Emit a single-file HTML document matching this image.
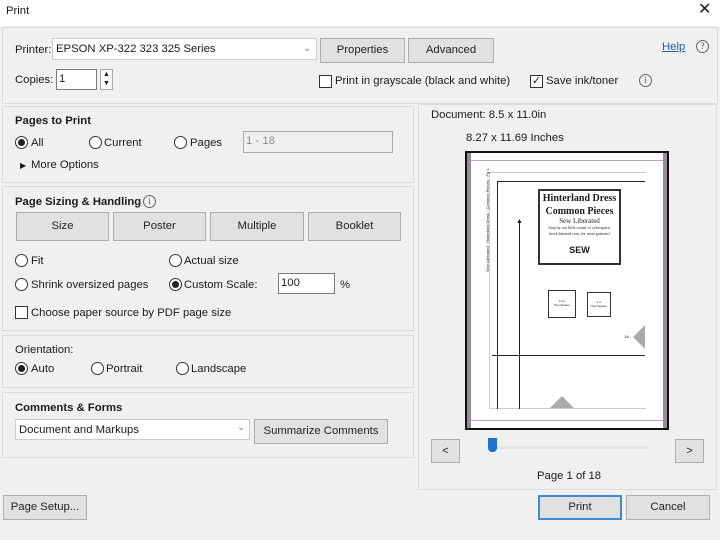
<!DOCTYPE html>
<html><head><meta charset="utf-8"><style>
*{box-sizing:border-box;margin:0;padding:0}
body{width:720px;height:540px;background:#f0f0f0;font-family:"Liberation Sans",sans-serif;font-size:11.3px;color:#1a1a1a;position:relative;overflow:hidden}
.a{position:absolute;white-space:nowrap;line-height:15px}
.panel{position:absolute;border:1px solid #dcdcdc;background:#f0f0f0}
.btn{position:absolute;background:#e1e1e1;border:1px solid #adadad;text-align:center;color:#222}
.inp{position:absolute;background:#fff;border:1px solid #7a7a7a}
.rad{position:absolute;width:13px;height:13px;border:1px solid #333;border-radius:50%;background:#fff}
.rad.on::after{content:"";position:absolute;left:2px;top:2px;width:7px;height:7px;border-radius:50%;background:#222}
.chk{position:absolute;width:13px;height:13px;border:1px solid #333;background:#fff}
.b{font-weight:bold}
.info{position:absolute;width:13px;height:13px;border:1px solid #666;border-radius:50%;font-size:9px;text-align:center;line-height:11px;color:#555;font-family:"Liberation Serif",serif}
</style></head><body>
<div class="a" style="left:0;top:0;width:720px;height:26px;background:#fff"></div>
<div class="a" style="left:6px;top:4px">Print</div>
<div class="a" style="left:698px;top:1px;font-size:16px;line-height:18px">✕</div>

<div class="panel" style="left:2px;top:27px;width:716px;height:77px"></div>
<div class="a" style="left:15px;top:43px">Printer:</div>
<div class="inp" style="left:52px;top:38px;width:265px;height:22px;border-color:#ccc"></div>
<div class="a" style="left:56px;top:42px">EPSON XP-322 323 325 Series</div>
<div class="a" style="left:303px;top:41px;color:#888;font-size:10px">⌄</div>
<div class="btn" style="left:320px;top:38px;width:85px;height:25px;line-height:23px">Properties</div>
<div class="btn" style="left:408px;top:38px;width:86px;height:25px;line-height:23px">Advanced</div>
<div class="a" style="left:662px;top:40px;color:#1a5fb4;text-decoration:underline">Help</div>
<div class="info" style="left:696px;top:40px">?</div>
<div class="a" style="left:15px;top:73px">Copies:</div>
<div class="inp" style="left:56px;top:69px;width:41px;height:21px"></div>
<div class="a" style="left:59px;top:72px">1</div>
<div class="a" style="left:100px;top:69px;width:13px;height:21px;border:1px solid #aaa;background:#f8f8f8;font-size:7px;text-align:center;line-height:9px">▲<br>▼</div>
<div class="chk" style="left:319px;top:75px"></div>
<div class="a" style="left:335px;top:74px">Print in grayscale (black and white)</div>
<div class="chk" style="left:530px;top:75px;font-size:11px;line-height:11px;text-align:center">✓</div>
<div class="a" style="left:546px;top:74px">Save ink/toner</div>
<div class="info" style="left:639px;top:74px">i</div>

<div class="panel" style="left:2px;top:106px;width:412px;height:77px"></div>
<div class="a b" style="left:15px;top:114px">Pages to Print</div>
<div class="rad on" style="left:15px;top:136px"></div><div class="a" style="left:31px;top:136px">All</div>
<div class="rad" style="left:89px;top:136px"></div><div class="a" style="left:104px;top:136px">Current</div>
<div class="rad" style="left:174px;top:136px"></div><div class="a" style="left:190px;top:136px">Pages</div>
<div class="inp" style="left:243px;top:131px;width:150px;height:22px;background:#f0f0f0;border-color:#aaa"></div>
<div class="a" style="left:246px;top:134px;color:#888">1 - 18</div>
<div class="a" style="left:20px;top:158px;font-size:8px">▶</div><div class="a" style="left:31px;top:158px">More Options</div>

<div class="panel" style="left:2px;top:186px;width:412px;height:145px"></div>
<div class="a b" style="left:15px;top:195px">Page Sizing &amp; Handling</div>
<div class="info" style="left:143px;top:195px">i</div>
<div class="btn" style="left:16px;top:212px;width:93px;height:29px;line-height:27px">Size</div>
<div class="btn" style="left:113px;top:212px;width:93px;height:29px;line-height:27px">Poster</div>
<div class="btn" style="left:210px;top:212px;width:94px;height:29px;line-height:27px">Multiple</div>
<div class="btn" style="left:308px;top:212px;width:93px;height:29px;line-height:27px">Booklet</div>
<div class="rad" style="left:15px;top:254px"></div><div class="a" style="left:31px;top:254px">Fit</div>
<div class="rad" style="left:169px;top:254px"></div><div class="a" style="left:184px;top:254px">Actual size</div>
<div class="rad" style="left:15px;top:278px"></div><div class="a" style="left:31px;top:278px">Shrink oversized pages</div>
<div class="rad on" style="left:169px;top:278px"></div><div class="a" style="left:184px;top:278px">Custom Scale:</div>
<div class="inp" style="left:278px;top:273px;width:57px;height:21px"></div>
<div class="a" style="left:281px;top:276px">100</div>
<div class="a" style="left:340px;top:278px">%</div>
<div class="chk" style="left:15px;top:306px"></div><div class="a" style="left:31px;top:306px">Choose paper source by PDF page size</div>

<div class="panel" style="left:2px;top:335px;width:412px;height:53px"></div>
<div class="a" style="left:15px;top:343px">Orientation:</div>
<div class="rad on" style="left:15px;top:362px"></div><div class="a" style="left:31px;top:362px">Auto</div>
<div class="rad" style="left:91px;top:362px"></div><div class="a" style="left:106px;top:362px">Portrait</div>
<div class="rad" style="left:176px;top:362px"></div><div class="a" style="left:191px;top:362px">Landscape</div>

<div class="panel" style="left:2px;top:392px;width:412px;height:66px"></div>
<div class="a b" style="left:15px;top:401px">Comments &amp; Forms</div>
<div class="inp" style="left:15px;top:419px;width:235px;height:21px;border-color:#ccc"></div>
<div class="a" style="left:19px;top:423px">Document and Markups</div>
<div class="a" style="left:237px;top:420px;color:#888;font-size:10px">⌄</div>
<div class="btn" style="left:254px;top:419px;width:134px;height:25px;line-height:23px">Summarize Comments</div>

<div class="panel" style="left:418px;top:104px;width:299px;height:386px"></div>
<div class="a" style="left:431px;top:108px">Document: 8.5 x 11.0in</div>
<div class="a" style="left:466px;top:131px">8.27 x 11.69 Inches</div>
<div class="a" style="left:465px;top:151px;width:204px;height:279px;border:2px solid #111;background:#fff"></div>
<div class="a" style="left:467px;top:153px;width:4px;height:275px;background:#9a8a9a"></div>
<div class="a" style="left:663px;top:153px;width:4px;height:275px;background:#9a8a9a"></div>
<div class="a" style="left:471px;top:160px;width:192px;height:1px;background:#b9a3c0"></div>
<div class="a" style="left:471px;top:420px;width:192px;height:1px;background:#b9a3c0"></div>
<div class="a" style="left:489px;top:172px;width:157px;height:237px;border:1px solid #ccc;border-right:none"></div>
<div class="a" style="left:497px;top:181px;width:1px;height:228px;background:#222"></div>
<div class="a" style="left:497px;top:181px;width:148px;height:1px;background:#222"></div>
<div class="a" style="left:519px;top:222px;width:1px;height:187px;background:#222"></div>
<div class="a" style="left:516px;top:214px;font-size:7px">▲</div>
<div class="a" style="left:492px;top:355px;width:153px;height:1px;background:#222"></div>
<div class="a" style="font-size:4px;line-height:5px;transform:rotate(-90deg);transform-origin:0 0;top:272px;left:485px">Sew Liberated · Hinterland Dress · Common Pieces · Pg 1</div>
<div class="a" style="left:538px;top:189px;width:83px;height:76px;border:2px solid #333;text-align:center;font-family:'Liberation Serif',serif;font-size:10px;font-weight:bold;line-height:13px;padding-top:1px">Hinterland Dress<br>Common Pieces<div style="font-size:7px;font-weight:normal;line-height:6px">Sew Liberated<br><span style="font-size:4px;line-height:4px">Stop by our little corner of cyberspace,<br>SewLiberated.com, for more patterns!</span></div><div style="font-family:'Liberation Sans';font-size:9px;margin-top:8px">SEW</div></div>
<div class="a" style="left:548px;top:290px;width:28px;height:28px;border:1px solid #333;font-size:3px;line-height:4px;text-align:center;padding-top:8px">3 cm<br>Test Square</div>
<div class="a" style="left:587px;top:292px;width:24px;height:25px;border:1px solid #333;font-size:3px;line-height:4px;text-align:center;padding-top:7px">1 in<br>Test Square</div>
<div class="a" style="left:633px;top:325px;width:0;height:0;border-top:12px solid transparent;border-bottom:12px solid transparent;border-right:12px solid #aaa"></div>
<div class="a" style="left:624px;top:334px;font-size:4px;line-height:5px">1A</div>
<div class="a" style="left:550px;top:396px;width:0;height:0;border-left:12px solid transparent;border-right:12px solid transparent;border-bottom:12px solid #aaa"></div>
<div class="btn" style="left:431px;top:439px;width:29px;height:24px;line-height:22px;font-size:11px">&lt;</div>
<div class="btn" style="left:675px;top:439px;width:29px;height:24px;line-height:22px;font-size:11px">&gt;</div>
<div class="a" style="left:490px;top:446px;width:157px;height:3px;background:#e3e3e3"></div>
<div class="a" style="left:488px;top:438px;width:9px;height:14px;background:#1e73d0;border-radius:0 0 4px 4px"></div>
<div class="a" style="left:537px;top:469px">Page 1 of 18</div>

<div class="btn" style="left:3px;top:495px;width:84px;height:25px;line-height:23px">Page Setup...</div>
<div class="btn" style="left:538px;top:495px;width:84px;height:25px;line-height:21px;border:2px solid #3c8ad8">Print</div>
<div class="btn" style="left:626px;top:495px;width:84px;height:25px;line-height:23px">Cancel</div>
</body></html>
